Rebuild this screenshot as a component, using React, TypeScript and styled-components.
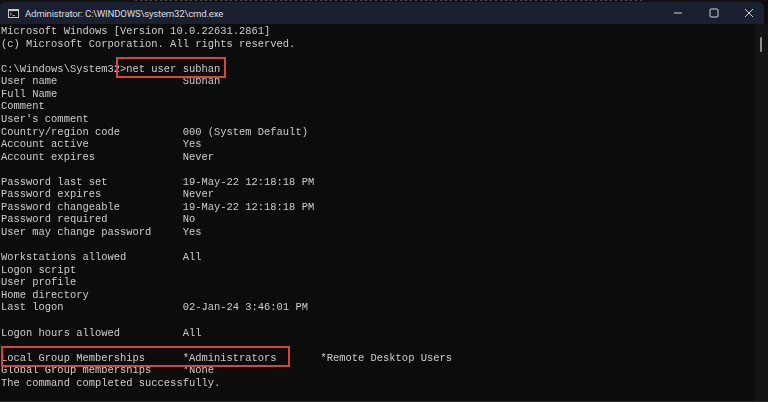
import React from 'react'
import styled, { createGlobalStyle } from 'styled-components'

const GlobalStyle = createGlobalStyle`
	html, body {
		margin: 0;
		padding: 0;
		background: #0e0e0e;
	}
`

const Page = styled.div`
	position: relative;
	width: 768px;
	height: 402px;
	box-sizing: border-box;
	overflow: hidden;
	display: flex;
	flex-direction: column;
	background: #0c0c0c;
	border-bottom: 1px solid #2a2a2a;
`

const TopStrip = styled.div`
	height: 2px;
	flex: none;
	background: #101010;
	background-image: repeating-linear-gradient(90deg, #4a4a4a 0 2px, transparent 2px 5px);
	background-size: 510px 1px;
	background-position: 135px 0;
	background-repeat: no-repeat;
`

const TitleBar = styled.div`
	height: 22px;
	flex: none;
	display: flex;
	align-items: center;
	margin-right: 4px;
	padding: 0 3px 0 8px;
	background: #1b2030;
	border-radius: 5px 6px 0 0;
`

const AppIcon = styled.svg`
	width: 11px;
	height: 9px;
	flex: none;
	margin-right: 6px;
`

const Title = styled.span`
	flex: 1;
	font-family: Roboto, "Liberation Sans", sans-serif;
	font-size: 9.6px;
	letter-spacing: -0.2px;
	color: #d8dade;
	white-space: nowrap;
`

const WindowControls = styled.div`
	display: flex;
	gap: 11.5px;
`

const WindowButton = styled.div`
	width: 24px;
	height: 22px;
	display: flex;
	align-items: center;
	justify-content: center;
`

const Console = styled.div`
	flex: 1;
	position: relative;
	display: flex;
`

const Output = styled.pre`
	flex: 1;
	margin: 0;
	padding: 1px 0 0 1px;
	font-family: "Liberation Mono", "DejaVu Sans Mono", monospace;
	font-size: 10.45px;
	line-height: 12.57px;
	color: #cccccc;
	filter: blur(0.35px);
`

const ScrollTrack = styled.div`
	width: 14px;
	flex: none;
	display: flex;
	justify-content: center;
	background: #141414;
	padding-top: 13px;
`

const ScrollThumb = styled.div`
	width: 2px;
	height: 15px;
	border-radius: 1px;
	background: #8a8a8a;
`

const Callout = styled.div<{ $left: number; $top: number; $width: number; $height: number }>`
	position: absolute;
	left: ${p => p.$left}px;
	top: ${p => p.$top}px;
	width: ${p => p.$width}px;
	height: ${p => p.$height}px;
	box-sizing: border-box;
	border: 2.5px solid #d6443f;
`

const lines = [
	'Microsoft Windows [Version 10.0.22631.2861]',
	'(c) Microsoft Corporation. All rights reserved.',
	'',
	'C:\\Windows\\System32>net user subhan',
	'User name                    Subhan',
	'Full Name',
	'Comment',
	"User's comment",
	'Country/region code          000 (System Default)',
	'Account active               Yes',
	'Account expires              Never',
	'',
	'Password last set            19-May-22 12:18:18 PM',
	'Password expires             Never',
	'Password changeable          19-May-22 12:18:18 PM',
	'Password required            No',
	'User may change password     Yes',
	'',
	'Workstations allowed         All',
	'Logon script',
	'User profile',
	'Home directory',
	'Last logon                   02-Jan-24 3:46:01 PM',
	'',
	'Logon hours allowed          All',
	'',
	'Local Group Memberships      *Administrators       *Remote Desktop Users',
	'Global Group memberships     *None',
	'The command completed successfully.',
]

const App: React.FC = () => {
	return (
		<Page>
			<GlobalStyle />
			<TopStrip />
			<TitleBar>
				<AppIcon viewBox="0 0 11 9">
					<rect x="0.5" y="0.5" width="10" height="8" fill="#111" stroke="#c8c8c8" />
					<rect x="0.5" y="0.5" width="10" height="1.6" fill="#c8c8c8" />
					<path d="M2 3.6 L3.6 5 L2 6.4 M4.5 6.6 H7" stroke="#ddd" strokeWidth="0.8" fill="none" />
				</AppIcon>
				<Title>Administrator: C:\WINDOWS\system32\cmd.exe</Title>
				<WindowControls>
					<WindowButton>
						<svg width="10" height="10" viewBox="0 0 10 10">
							<path d="M1 5 H9" stroke="#d0d2d6" strokeWidth="1" />
						</svg>
					</WindowButton>
					<WindowButton>
						<svg width="10" height="10" viewBox="0 0 10 10">
							<rect x="1" y="1" width="8" height="8" rx="1" fill="none" stroke="#d0d2d6" />
						</svg>
					</WindowButton>
					<WindowButton>
						<svg width="10" height="10" viewBox="0 0 10 10">
							<path d="M1 1 L9 9 M9 1 L1 9" stroke="#d0d2d6" strokeWidth="1" />
						</svg>
					</WindowButton>
				</WindowControls>
			</TitleBar>
			<Console>
				<Output>{lines.join('\n')}</Output>
				<ScrollTrack>
					<ScrollThumb />
				</ScrollTrack>
				<Callout $left={116} $top={33} $width={110} $height={21} />
				<Callout $left={1} $top={322} $width={289} $height={21} />
			</Console>
		</Page>
	)
}

export default App
